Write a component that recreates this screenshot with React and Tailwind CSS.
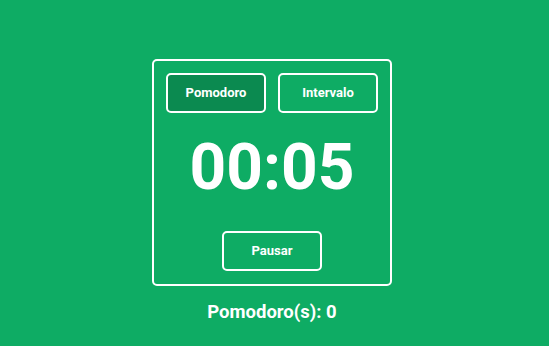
export default function App() {
  return (
    <div
      className="min-h-[346px] w-full bg-[#0eac64] flex flex-col items-center pt-[59px] pr-[5px] text-white"
      style={{ fontFamily: "Roboto, 'Liberation Sans', sans-serif" }}
    >
      <div className="w-[240px] h-[227px] border-2 border-white rounded-[5px] px-3 pt-3 flex flex-col items-center">
        <div className="flex gap-3 w-full">
          <button className="w-[100px] h-[40px] border-2 border-white rounded-[5px] bg-[#0b8a50] text-[13px] font-bold text-white">
            Pomodoro
          </button>
          <button className="w-[100px] h-[40px] border-2 border-white rounded-[5px] text-[13px] font-bold text-white">
            Intervalo
          </button>
        </div>
        <div className="mt-[23px] h-[64px] leading-[64px] text-[64px] font-bold">
          00:05
        </div>
        <button className="mt-[31px] w-[100px] h-[40px] border-2 border-white rounded-[5px] text-[13px] font-bold text-white">
          Pausar
        </button>
      </div>
      <div className="mt-[13px] text-[18.5px] leading-[26px] font-bold">Pomodoro(s): 0</div>
    </div>
  );
}
